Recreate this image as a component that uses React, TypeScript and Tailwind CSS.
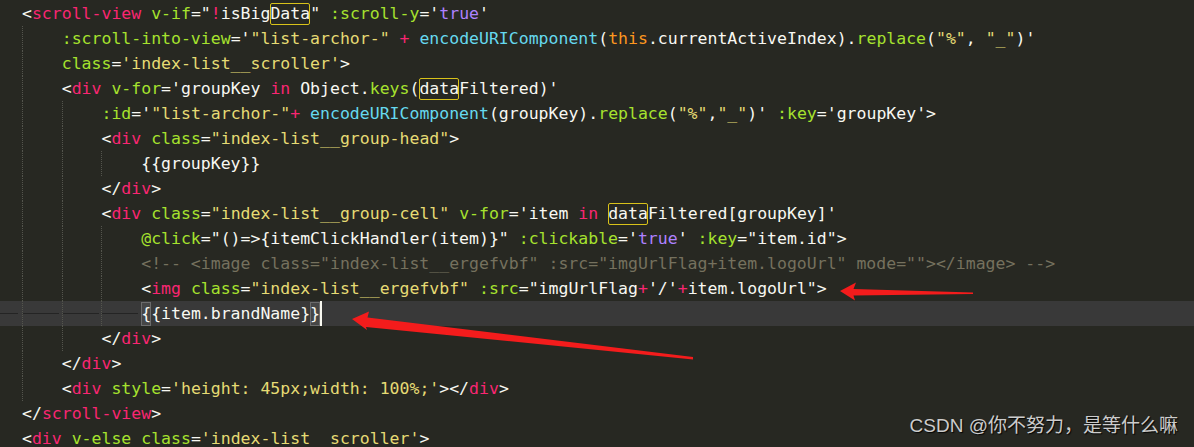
import * as React from "react";

type Tok = [string, string];
type Line = { indent: number; toks: Tok[]; active?: boolean };

const COLORS: Record<string, string> = {
  w: "text-[#f8f8f2]",
  p: "text-[#f92672]",
  g: "text-[#a6e22e]",
  y: "text-[#e6db74]",
  c: "text-[#66d9ef]",
  o: "text-[#fd971f]",
  v: "text-[#ae81ff]",
  m: "text-[#75715e]",
};

const lines: Line[] = [
  { indent: 0, toks: [["w", "<"], ["p", "scroll-view"], ["w", " "], ["g", "v-if"], ["w", '="'], ["p", "!"], ["w", "isBig"], ["box", "Data"], ["w", '" '], ["g", ":scroll-y"], ["w", "='"], ["v", "true"], ["w", "'"]] },
  { indent: 1, toks: [["g", ":scroll-into-view"], ["w", "='"], ["y", '"list-archor-"'], ["w", " "], ["p", "+"], ["w", " "], ["c", "encodeURIComponent"], ["w", "("], ["o", "this"], ["w", ".currentActiveIndex)."], ["g", "replace"], ["w", "("], ["y", '"%"'], ["w", ", "], ["y", '"_"'], ["w", ")'"]] },
  { indent: 1, toks: [["g", "class"], ["w", "="], ["y", "'index-list__scroller'"], ["w", ">"]] },
  { indent: 1, toks: [["w", "<"], ["p", "div"], ["w", " "], ["g", "v-for"], ["w", "='groupKey "], ["p", "in"], ["w", " Object."], ["g", "keys"], ["w", "("], ["box", "data"], ["w", "Filtered)'"]] },
  { indent: 2, toks: [["g", ":id"], ["w", "='"], ["y", '"list-archor-"'], ["p", "+"], ["w", " "], ["c", "encodeURIComponent"], ["w", "(groupKey)."], ["g", "replace"], ["w", "("], ["y", '"%"'], ["w", ","], ["y", '"_"'], ["w", ")' "], ["g", ":key"], ["w", "='groupKey'>"]] },
  { indent: 2, toks: [["w", "<"], ["p", "div"], ["w", " "], ["g", "class"], ["w", "="], ["y", '"index-list__group-head"'], ["w", ">"]] },
  { indent: 3, toks: [["w", "{{groupKey}}"]] },
  { indent: 2, toks: [["w", "</"], ["p", "div"], ["w", ">"]] },
  { indent: 2, toks: [["w", "<"], ["p", "div"], ["w", " "], ["g", "class"], ["w", "="], ["y", '"index-list__group-cell"'], ["w", " "], ["g", "v-for"], ["w", "='item "], ["p", "in"], ["w", " "], ["box", "data"], ["w", "Filtered[groupKey]'"]] },
  { indent: 3, toks: [["g", "@click"], ["w", '="()=>{itemClickHandler(item)}" '], ["g", ":clickable"], ["w", "='"], ["v", "true"], ["w", "' "], ["g", ":key"], ["w", '="item.id">']] },
  { indent: 3, toks: [["m", '<!-- <image class="index-list__ergefvbf" :src="imgUrlFlag+item.logoUrl" mode=""></image> -->']] },
  { indent: 3, toks: [["w", "<"], ["p", "img"], ["w", " "], ["g", "class"], ["w", "="], ["y", '"index-list__ergefvbf"'], ["w", " "], ["g", ":src"], ["w", '="imgUrlFlag'], ["p", "+"], ["w", "'/'"], ["p", "+"], ["w", 'item.logoUrl">']] },
  { indent: 3, active: true, toks: [["brace", "{"], ["w", "{item.brandName}"], ["brace", "}"], ["cursor", ""]] },
  { indent: 2, toks: [["w", "</"], ["p", "div"], ["w", ">"]] },
  { indent: 1, toks: [["w", "</"], ["p", "div"], ["w", ">"]] },
  { indent: 1, toks: [["w", "<"], ["p", "div"], ["w", " "], ["g", "style"], ["w", "="], ["y", "'height: 45px;width: 100%;'"], ["w", "></"], ["p", "div"], ["w", ">"]] },
  { indent: 0, toks: [["w", "</"], ["p", "scroll-view"], ["w", ">"]] },
  { indent: 0, toks: [["w", "<"], ["p", "div"], ["w", " "], ["g", "v-else"], ["w", " "], ["g", "class"], ["w", "="], ["y", "'index-list__scroller'"], ["w", ">"]] },
];

const Indent = ({ dash }: { dash?: boolean }) => (
  <span className="inline-flex h-[25px] w-[4ch] items-center align-top bg-[linear-gradient(to_bottom,#54554d_50%,transparent_50%)] bg-[length:1px_2px] bg-repeat-y">
    {dash && <span className="ml-px h-px w-[36px] bg-[#242424]" />}
  </span>
);

const Token = ({ tok }: { tok: Tok }) => {
  const [kind, text] = tok;
  if (kind === "box")
    return (
      <span className="inline-block rounded-[2px] leading-[22px] text-[#f8f8f2] outline outline-1 -outline-offset-1 outline-[#d8c21a]">
        {text}
      </span>
    );
  if (kind === "brace")
    return (
      <span className="inline-block bg-[#464646] leading-[24px] text-[#f8f8f2] outline outline-1 -outline-offset-1 outline-[#6c6c6c]">
        {text}
      </span>
    );
  if (kind === "cursor") return <span className="inline-block h-[25px] w-[2px] bg-[#f8f8f0] align-top" />;
  return <span className={COLORS[kind]}>{text}</span>;
};

export default function App() {
  return (
    <div className="relative h-[447px] w-[1194px] overflow-hidden bg-[#272822] pt-[1px] text-[16.5px] [font-family:'DejaVu_Sans_Mono',monospace]">
      {lines.map((line, i) => (
        <div
          key={i}
          className={`h-[25px] whitespace-pre leading-[25px] ${line.active ? "bg-[#393939]" : ""}`}
        >
          <span className="inline-flex h-[25px] w-[22px] items-center align-top">
            {line.active && <span className="h-px w-[18px] bg-[#242424]" />}
          </span>
          {Array.from({ length: line.indent }).map((_, k) => (
            <Indent key={k} dash={line.active} />
          ))}
          {line.toks.map((t, j) => (
            <Token key={j} tok={t} />
          ))}
        </div>
      ))}

      {/* red annotation arrows */}
      <svg className="pointer-events-none absolute inset-0" width="1194" height="447" viewBox="0 0 1194 447">
        <polygon points="840,291 856,282.5 853.5,289 973,292.4 973,294 853.5,295.5 855,300.5" fill="#f41c1c" />
        <polygon points="352,319 369,311.5 367.5,317.5 693,357 693,359.5 366,327 367,330" fill="#f41c1c" />
      </svg>

      <div className="absolute right-[16px] top-[413px] text-[19px] leading-[26px] text-[#cccccc] [font-family:'Liberation_Sans','Noto_Sans_CJK_SC',sans-serif] [text-shadow:1px_1px_1px_rgba(0,0,0,0.9)]">
        CSDN @你不努力，是等什么嘛
      </div>
    </div>
  );
}
